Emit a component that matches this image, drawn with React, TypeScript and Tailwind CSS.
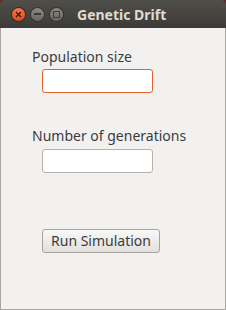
export default function App() {
  return (
    <div className="h-[310px] w-[226px] bg-[#5a2a2e] font-['Noto_Sans',sans-serif]">
      <div className="flex h-full flex-col overflow-hidden rounded-t-[5px]">
        <div className="flex h-[28px] shrink-0 items-center bg-gradient-to-b from-[#504e49] to-[#3c3b37] pl-[12px]">
          <div className="flex gap-[6px]">
            <span className="flex h-[13px] w-[13px] items-center justify-center rounded-full bg-gradient-to-b from-[#f7764a] to-[#df4a16] shadow-[0_0_0_1px_#3a2a22]">
              <svg width="7" height="7" viewBox="0 0 7 7">
                <path d="M1 1 L6 6 M6 1 L1 6" stroke="#3a1a10" strokeWidth="1.4" />
              </svg>
            </span>
            <span className="flex h-[13px] w-[13px] items-center justify-center rounded-full bg-gradient-to-b from-[#8a8883] to-[#68665f] shadow-[0_0_0_1px_#35342f]">
              <span className="h-[1.5px] w-[7px] bg-[#3c3b37]" />
            </span>
            <span className="flex h-[13px] w-[13px] items-center justify-center rounded-full bg-gradient-to-b from-[#8a8883] to-[#68665f] shadow-[0_0_0_1px_#35342f]">
              <span className="h-[7px] w-[7px] border-[1.5px] border-[#3c3b37]" />
            </span>
          </div>
          <span className="ml-[14px] text-[14px] font-bold text-[#dfdbd2]">Genetic Drift</span>
        </div>
        <div className="flex flex-1 flex-col border-x border-b border-[#a7a6a1] bg-[#f2f1f0] pl-[31px] pt-[19px] text-[14px] text-[#3c3c3c]">
          <label className="leading-[20px]">Population size</label>
          <input className="ml-[10px] mt-[2px] h-[24px] w-[111px] rounded-[3px] border border-[#e0612b] bg-white outline-none" />
          <label className="mt-[33px] leading-[20px]">Number of generations</label>
          <input className="ml-[10px] mt-[3px] h-[24px] w-[111px] rounded-[3px] border border-[#b6b2ab] bg-white outline-none" />
          <button className="ml-[10px] mt-[56px] h-[24px] w-[118px] rounded-[3px] border border-[#a8a49d] bg-gradient-to-b from-[#f8f8f7] to-[#e2e0dd] text-[14px] leading-none text-[#3c3c3c]">
            Run Simulation
          </button>
        </div>
      </div>
    </div>
  );
}
